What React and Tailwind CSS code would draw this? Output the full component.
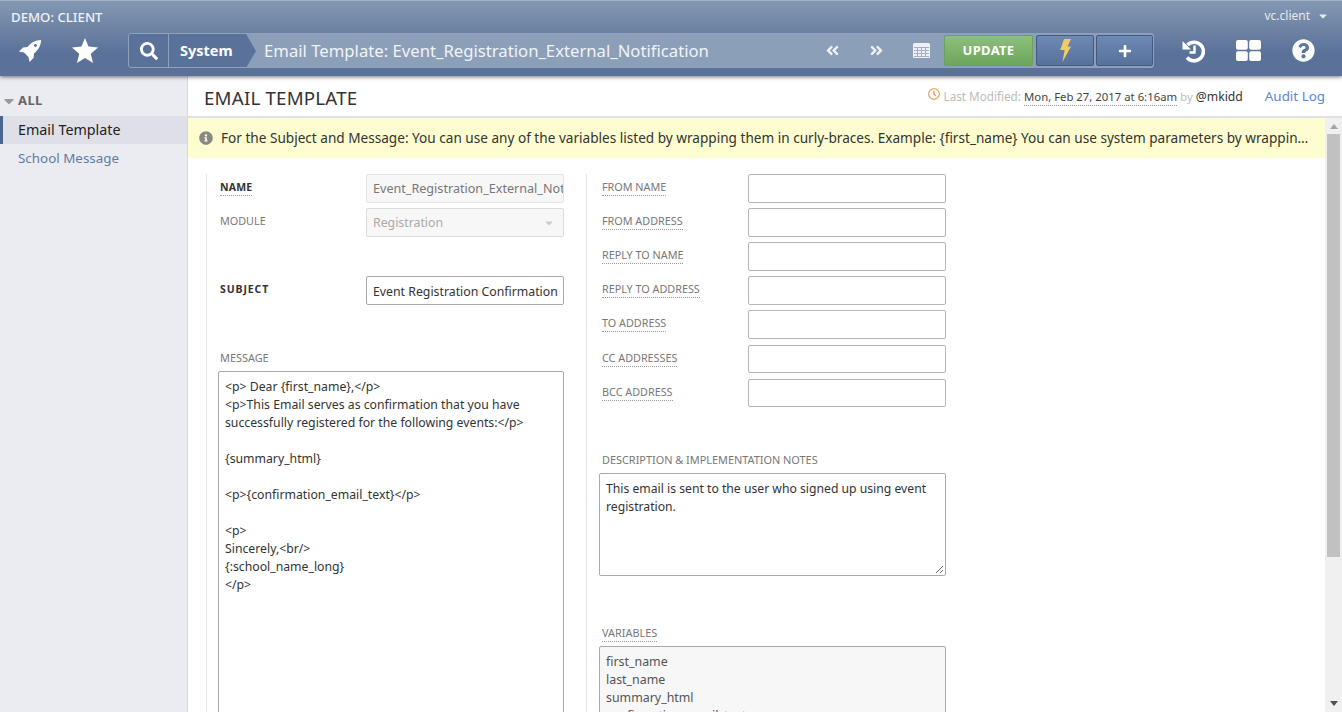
import React from "react";
import { FaSearch, FaAngleDoubleLeft, FaAngleDoubleRight, FaPlus, FaQuestionCircle, FaInfoCircle, FaRegClock, FaCaretDown } from "react-icons/fa";

function Field({ label, strong, wide, dotted = true, children, mb = "mb-[5px]" }) {
  return (
    <div className={`flex items-start ${mb}`}>
      <div className="w-[146px] shrink-0 pt-[4px] leading-[18px]">
        <span className={`${strong ? "text-[10.5px] font-bold text-[#333]" : "text-[10.8px] text-[#777]"} ${wide ? "tracking-[0.9px]" : strong ? "tracking-[0.2px]" : ""} ${dotted ? "border-b border-dotted border-[#999] pb-[1px]" : ""}`}>{label}</span>
      </div>
      {children}
    </div>
  );
}

function Box({ h = "h-[29px]" }) {
  return <div className={`w-[198px] ${h} bg-white border border-[#b5b5b5] rounded-[2px]`} />;
}

const rows = [
  ["FROM NAME", "h-[29px]", "mb-[5px]"],
  ["FROM ADDRESS", "h-[29px]", "mb-[5px]"],
  ["REPLY TO NAME", "h-[29px]", "mb-[5px]"],
  ["REPLY TO ADDRESS", "h-[29px]", "mb-[5px]"],
  ["TO ADDRESS", "h-[29px]", "mb-[6px]"],
  ["CC ADDRESSES", "h-[28px]", "mb-[6px]"],
  ["BCC ADDRESS", "h-[28px]", "mb-0"],
];

const message = `<p> Dear {first_name},</p>
<p>This Email serves as confirmation that you have
successfully registered for the following events:</p>

{summary_html}

<p>{confirmation_email_text}</p>

<p>
Sincerely,<br/>
{:school_name_long}
</p>`;

export default function App() {
  return (
    <div className="w-[1342px] h-[712px] overflow-hidden flex flex-col bg-white text-[#333] font-['Noto_Sans',sans-serif] text-[12.3px]">
      <header className="h-[76px] shrink-0 flex flex-col bg-gradient-to-b from-[#8498b3] to-[#5a7299] to-70% border-t border-[#a3b2c6] shadow-[0_1px_4px_rgba(0,0,0,0.55)] z-10 relative">
        <div className="h-[32px] flex items-center justify-between pl-[11px] pr-[13px]">
          <span className="text-[13.2px] font-medium text-[#f0f3f7] mt-[1px]">DEMO: CLIENT</span>
          <span className="flex items-center gap-[7px] text-[12px] text-[#e6eaf0] -mt-[2px]">vc.client <FaCaretDown className="text-[12px]" /></span>
        </div>
        <div className="flex items-center h-[35px]">
          <div className="w-[128px] shrink-0 flex items-center pl-[19px] gap-[31px] text-white">
            <svg width="22" height="22" viewBox="0 0 22 22" fill="currentColor"><path fillRule="evenodd" d="M22 0C16 0 12 3 8.5 7L4 7.5 0 11.5 5 12.5 9.5 17 10.5 22 14.5 18 15 13.5C19 10 22 6 22 0ZM16.5 4a1.5 1.5 0 1 0 .01 0Z" /></svg>
            <svg width="26" height="25" viewBox="0 0 26 25" fill="currentColor"><polygon points="13,0 16.5,8.6 26,9.5 18.8,15.7 21,25 13,20 5,25 7.2,15.7 0,9.5 9.5,8.6" /></svg>
          </div>
          <div className="w-[1026px] h-[35px] flex items-stretch bg-[#8c9fb9] border border-[#8fa1bb] rounded-[3px] overflow-hidden">
            <div className="w-[40px] flex items-center justify-center bg-[#5a7299] border-r border-[#8fa1bb] text-white">
              <FaSearch className="text-[18px]" />
            </div>
            <div className="relative w-[77px] flex items-center pl-[11px] bg-[#5a7299] text-white font-bold text-[14.5px]">
              System
              <span className="absolute right-[-10px] top-0 w-0 h-0 border-y-[17px] border-y-transparent border-l-[10px] border-l-[#5a7299]" />
            </div>
            <div className="flex-1 flex items-center pl-[18px] text-[#f1f3f7] text-[16.7px] whitespace-nowrap">Email Template: Event_Registration_External_Notification</div>
            <div className="flex items-center gap-[29px] text-[#eef1f6] mr-[14px]">
              <FaAngleDoubleLeft className="text-[15px]" />
              <FaAngleDoubleRight className="text-[15px]" />
              <svg width="17" height="15" viewBox="0 0 17 15"><rect width="17" height="15" rx="1.5" fill="#eef1f6" /><path d="M1 4.5h15M1 7.5h15M1 10.5h15M1 13.5h15M4.5 4v10M8.5 4v10M12.5 4v10" stroke="#8c9fb9" strokeWidth="1" opacity="0.8" /></svg>
            </div>
            <div className="w-[89px] my-[1px] flex items-center justify-center rounded-[2px] border border-[#6ca25b] bg-gradient-to-b from-[#8cc07c] to-[#6ea65c] text-white font-bold text-[13px] tracking-[0.3px]">UPDATE</div>
            <div className="w-[58px] my-[1px] ml-[3px] flex items-center justify-center rounded-[2px] border border-[#435a7e] bg-gradient-to-b from-[#6d8ab3] to-[#57719b]">
              <svg width="13" height="23" viewBox="0 0 13 23"><path d="M5 0h7L8.5 7.5H12L3.5 23 5.6 11H1.2z" fill="#f1cc63" /></svg>
            </div>
            <div className="w-[57px] my-[1px] ml-[2px] flex items-center justify-center rounded-[2px] border border-[#435a7e] bg-gradient-to-b from-[#6d8ab3] to-[#57719b] text-white">
              <FaPlus className="text-[14px]" />
            </div>
          </div>
          <div className="flex-1 flex items-center pl-[28px] gap-[31px] text-white">
            <svg width="23" height="24" viewBox="0 0 23 24" fill="none"><path d="M5.5 6A9.3 9.3 0 1 1 5 18.5" stroke="white" strokeWidth="3.6" /><path d="M0.5 2L0.5 10.5H9z" fill="white" /><path d="M12.5 6.5V13.5H7.5" stroke="white" strokeWidth="2.4" /></svg>
            <svg width="25" height="21" viewBox="0 0 25 21" fill="white"><rect width="11.8" height="9.8" rx="2" /><rect x="13.2" width="11.8" height="9.8" rx="2" /><rect y="11.2" width="11.8" height="9.8" rx="2" /><rect x="13.2" y="11.2" width="11.8" height="9.8" rx="2" /></svg>
            <FaQuestionCircle className="text-[23px]" />
          </div>
        </div>
      </header>

      <div className="flex-1 flex min-h-0">
        <aside className="w-[188px] shrink-0 bg-[#ebecf2] border-r border-[#d8d9de] pt-[15px]">
          <div className="flex items-center h-[20px] pl-[1px] text-[#666] font-bold text-[13px] tracking-[0.4px]">
            <FaCaretDown className="text-[16px] text-[#999] mr-[1px]" />ALL
          </div>
          <div className="mt-[5px] h-[28px] flex items-center bg-[#dfe0e7] border-l-[3px] border-[#4a6590] pl-[15px] text-[#222] text-[14.3px]">Email Template</div>
          <div className="h-[28px] flex items-center pl-[18px] text-[#5f7ba3] text-[13.4px]">School Message</div>
        </aside>

        <main className="flex-1 min-w-0 flex flex-col">
          <div className="h-[42px] shrink-0 flex justify-between pl-[16px] pr-[17px] border-b-[2px] border-[#e2e2e2]">
            <h1 className="text-[18.7px] text-[#333] tracking-[0.2px] leading-[28px] mt-[8px]">EMAIL TEMPLATE</h1>
            <div className="flex items-baseline h-[38px] pt-[10px]">
              <FaRegClock className="text-[12px] text-[#e29a4d] mr-[4px] ml-[1px] self-start mt-[2px]" />
              <span className="text-[#bbb] text-[11.7px]">Last Modified:&nbsp;</span>
              <span className="text-[#444] text-[11.35px] border-b border-dotted border-[#999]">Mon, Feb 27, 2017 at 6:16am</span>
              <span className="text-[#bbb] text-[11.5px]">&nbsp;by&nbsp;</span>
              <span className="text-[#333] text-[12.2px]">@mkidd</span>
              <span className="ml-[22px] text-[13.4px] text-[#5b86d6]">Audit Log</span>
            </div>
          </div>
          <div className="flex-1 min-h-0 flex">
            <div className="flex-1 min-w-0 overflow-hidden">
              <div className="h-[40px] flex items-center bg-[#fdfdcf] pl-[11px] pr-[16px] text-[13.6px] text-[#333]">
                <FaInfoCircle className="text-[14px] text-[#888] mr-[8px] shrink-0" />
                <span className="truncate">For the Subject and Message: You can use any of the variables listed by wrapping them in curly-braces. Example: {"{first_name}"} You can use system parameters by wrapping them in curly-braces with a colon prefix</span>
              </div>
              <div className="flex pl-[18px] pt-[16px]">
                <div className="w-[381px] shrink-0 border-l border-r border-[#e4e4e4] pl-[11px] pr-[22px] h-[600px]">
                  <div className="pl-[2px]">
                    <Field label="NAME" strong>
                      <div className="w-[198px] h-[29px] flex items-center pl-[6px] pt-[1px] bg-[#f7f7f7] border border-[#e4e4e4] rounded-[2px] text-[#777] text-[12.6px] overflow-hidden whitespace-nowrap">Event_Registration_External_Notification</div>
                    </Field>
                    <Field label="MODULE" dotted={false}>
                      <div className="w-[198px] h-[29px] flex items-center justify-between pl-[6px] pr-[8px] pt-[1px] bg-[#f7f7f7] border border-[#dcdcdc] rounded-[2px] text-[#aaa]">Registration <FaCaretDown className="text-[12px] text-[#ccc]" /></div>
                    </Field>
                    <div className="h-[34px]" />
                    <Field label="SUBJECT" strong wide dotted={false}>
                      <div className="w-[198px] h-[29px] flex items-center px-[6px] pt-[3px] bg-white border border-[#aaa] rounded-[2px] text-[#333] overflow-hidden whitespace-nowrap">Event Registration Confirmation</div>
                    </Field>
                  </div>
                  <div className="pl-[2px] mt-[44px] text-[10.9px] text-[#777] leading-[18px]">MESSAGE</div>
                  <pre className="mt-[4px] h-[400px] w-[346px] border border-[#aaa] rounded-[2px] pl-[6px] pt-[6px] font-['Noto_Sans',sans-serif] text-[12.25px] leading-[18px] text-[#333]">{message}</pre>
                </div>
                <div className="pl-[12px]">
                  <div className="pl-[3px]">
                    {rows.map(([l, h, m]) => (
                      <Field key={l} label={l} mb={m}><Box h={h} /></Field>
                    ))}
                  </div>
                  <div className="pl-[3px] mt-[44px] text-[10.9px] text-[#777] leading-[18px]">DESCRIPTION &amp; IMPLEMENTATION NOTES</div>
                  <div className="relative mt-[4px] w-[347px] h-[103px] border border-[#aaa] rounded-[2px] px-[6px] py-[6px] text-[12.2px] leading-[18px]">
                    This email is sent to the user who signed up using event registration.
                    <svg className="absolute right-[1px] bottom-[1px]" width="9" height="9" viewBox="0 0 9 9"><path d="M1 8L8 1M5 8L8 5" stroke="#666" strokeWidth="1" /></svg>
                  </div>
                  <div className="pl-[3px] mt-[48px] text-[10.9px] text-[#777] leading-[18px]">
                    <span className="border-b border-dotted border-[#999] pb-[1px]">VARIABLES</span>
                  </div>
                  <div className="mt-[4px] w-[347px] h-[200px] bg-[#f7f7f7] border border-[#aaa] rounded-[2px] px-[6px] py-[6px] text-[12.4px] leading-[18px] text-[#555]">
                    first_name<br />last_name<br />summary_html<br />confirmation_email_text
                  </div>
                </div>
              </div>
            </div>
            <div className="w-[17px] shrink-0 flex flex-col items-center bg-[#f0f0f0]">
              <svg className="mt-[6px]" width="8" height="5" viewBox="0 0 8 5"><path d="M4 0l4 5H0z" fill="#a3a3a3" /></svg>
              <div className="mt-[5px] w-[13px] h-[423px] bg-[#c1c1c1]" />
              <div className="flex-1" />
              <svg className="mb-[6px]" width="8" height="5" viewBox="0 0 8 5"><path d="M4 5L0 0h8z" fill="#505050" /></svg>
            </div>
          </div>
        </main>
      </div>
    </div>
  );
}
